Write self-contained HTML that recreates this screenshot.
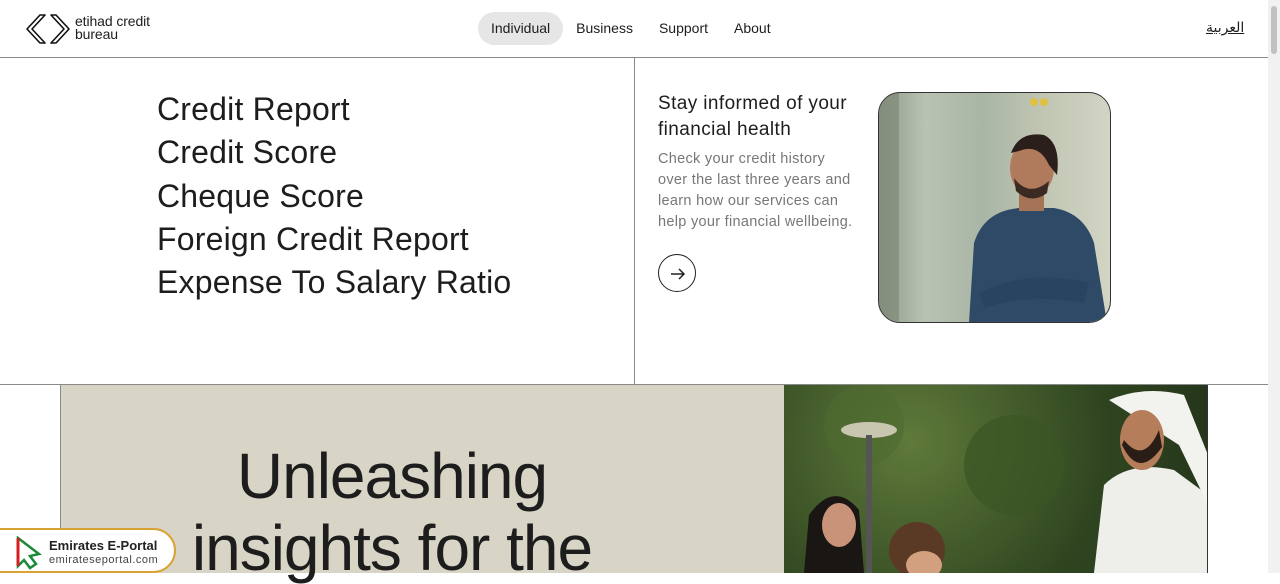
<!DOCTYPE html>
<html><head><meta charset="utf-8"><style>
*{margin:0;padding:0;box-sizing:border-box}
body{width:1280px;height:573px;overflow:hidden;background:#fff;font-family:"Liberation Sans",sans-serif;color:#1d1d1d;position:relative}
.hdr{position:absolute;left:0;top:0;width:1268px;height:58px;border-bottom:1px solid #8a8a8a}
.logo{position:absolute;left:26px;top:14px}
.logotxt{position:absolute;left:75px;top:15px;font-size:14px;line-height:13px;letter-spacing:-0.1px}
.nav{position:absolute;top:12px;left:478px;display:flex;gap:0}
.nav a{font-size:14px;padding:0 13px;height:33px;line-height:33px;border-radius:17px;color:#1d1d1d;text-decoration:none}
.nav a.on{background:#e6e6e6}
.ar{position:absolute;left:1206px;top:19px;font-size:14px;text-decoration:underline;font-family:"Liberation Sans","DejaVu Sans",sans-serif}
.vline{position:absolute;left:634px;top:58px;width:1px;height:327px;background:#8a8a8a}
.hline{position:absolute;left:0;top:384px;width:1268px;height:1px;background:#8a8a8a}
.list{position:absolute;left:157px;top:88px;font-size:32px;line-height:43.3px;letter-spacing:0.2px}
.h3{position:absolute;left:658px;top:91px;font-size:19px;line-height:26px;letter-spacing:0.4px}
.p{position:absolute;left:658px;top:149px;font-size:14.5px;line-height:21px;color:#777;letter-spacing:0.3px}
.circ{position:absolute;left:658px;top:254px;width:38px;height:38px;border:1px solid #222;border-radius:50%}
.img1{position:absolute;left:878px;top:92px;width:233px;height:231px;border-radius:22px;border:1.5px solid #333;overflow:hidden;background:linear-gradient(90deg,#8f9a88 0%,#b9c2b3 20%,#a9b5a5 45%,#c0c5b2 70%,#d2d4c4 100%)}
.beige{position:absolute;left:60px;top:385px;width:724px;height:188px;background:#d9d5c6;border-left:1px solid #8a8a8a}
.big{position:absolute;left:60px;top:440px;width:664px;text-align:center;font-size:64px;line-height:72px;letter-spacing:-1px;color:#1d1d1d}
.img2{position:absolute;left:784px;top:385px;width:424px;height:188px;overflow:hidden;background:radial-gradient(circle at 30% 30%,#5f7a3a,#2f4520 60%,#23331a);border-right:1px solid #333}
.sb{position:absolute;left:1268px;top:0;width:12px;height:573px;background:#f1f1f1}
.sb i{position:absolute;left:3px;top:6px;width:6px;height:48px;background:#c1c1c1;border-radius:3px}
.badge{position:absolute;left:-10px;top:528px;width:186px;height:45px;border:2px solid #d9a233;border-radius:0 23px 23px 0;background:#fff}
.badge b{position:absolute;left:57px;top:8px;font-size:13px;font-weight:bold;color:#222}
.badge span{position:absolute;left:57px;top:24px;font-size:11px;color:#444;letter-spacing:0.5px}
</style></head><body>
<div class="hdr">
<svg class="logo" width="44" height="30" viewBox="0 0 44 30" fill="none" stroke="#111" stroke-width="1.6" stroke-linejoin="round">
<path d="M14 1 L1 15 L14 29 L19 29 L6 15 L19 1 Z"/>
<path d="M25 1 L38 15 L25 29 L30 29 L43 15 L30 1 Z"/>
</svg>
<div class="logotxt">etihad credit<br>bureau</div>
<div class="nav"><a class="on">Individual</a><a>Business</a><a>Support</a><a>About</a></div>
<div class="ar">العربية</div>
</div>
<div class="vline"></div>
<div class="list">Credit Report<br>Credit Score<br>Cheque Score<br>Foreign Credit Report<br>Expense To Salary Ratio</div>
<div class="h3">Stay informed of your<br>financial health</div>
<div class="p">Check your credit history<br>over the last three years and<br>learn how our services can<br>help your financial wellbeing.</div>
<div class="circ"><svg width="38" height="38" viewBox="0 0 38 38" fill="none" stroke="#222" stroke-width="1.5"><path d="M12 19 H25 M20 14 L25 19 L20 24"/></svg></div>
<div class="img1">
<svg width="233" height="231" viewBox="0 0 233 231">
<circle cx="155" cy="9" r="4" fill="#e0c040"/><circle cx="165" cy="9" r="4" fill="#e0c040"/>
<rect x="0" y="0" width="20" height="231" fill="#7d8675" opacity=".6"/>
<path d="M90 230 L95 150 Q105 118 140 115 L175 115 Q205 120 215 150 L228 230 Z" fill="#2e4a66"/>
<path d="M100 200 Q150 175 210 190 L205 210 Q150 200 105 215 Z" fill="#284460"/>
<rect x="140" y="88" width="25" height="30" fill="#a57356"/>
<ellipse cx="153" cy="75" rx="22" ry="28" fill="#b07a5c"/>
<path d="M132 60 Q140 38 165 42 Q182 50 178 82 L170 72 Q160 50 140 58 Z" fill="#2a1f1a"/>
<path d="M135 85 Q150 105 170 88 L168 100 Q152 112 137 98 Z" fill="#3a2a22"/>
</svg></div>
<div class="hline"></div>
<div class="beige"></div>
<div class="big">Unleashing<br>insights for the</div>
<div class="img2">
<svg width="424" height="188" viewBox="0 0 424 188">
<circle cx="80" cy="40" r="40" fill="#4e6b30" opacity=".6"/><circle cx="230" cy="80" r="50" fill="#3b5524" opacity=".7"/>
<ellipse cx="85" cy="45" rx="28" ry="8" fill="#c9c6b0"/><rect x="82" y="50" width="6" height="138" fill="#555"/>
<path d="M20 188 L25 130 Q50 95 75 125 L80 188 Z" fill="#1a1613"/>
<ellipse cx="55" cy="140" rx="17" ry="22" fill="#c9937a"/>
<circle cx="133" cy="165" r="28" fill="#5a3a25"/><ellipse cx="140" cy="180" rx="18" ry="14" fill="#d3a07f"/>
<path d="M310 188 L320 100 Q345 75 390 85 L424 110 L424 188 Z" fill="#eeeeea"/>
<path d="M325 15 Q360 0 400 10 L424 70 L424 120 L395 60 Z" fill="#f2f2ee"/>
<ellipse cx="358" cy="55" rx="22" ry="30" fill="#b57d5a"/>
<path d="M338 60 Q355 95 378 62 L375 45 Q360 80 340 55 Z" fill="#2a1d15"/>
</svg></div>
<div class="badge">
<svg style="position:absolute;left:22px;top:6px" width="28" height="34" viewBox="0 0 28 34"><path d="M4 2 L4 30 L10 24 L16 32 L22 28 L16 20 L25 18 Z" fill="none" stroke="#1a8a3a" stroke-width="2.5"/><path d="M4 2 L4 30" stroke="#d42020" stroke-width="3"/></svg>
<b>Emirates E-Portal</b><span>emirateseportal.com</span>
</div>
<div class="sb"><i></i></div>
</body></html>
